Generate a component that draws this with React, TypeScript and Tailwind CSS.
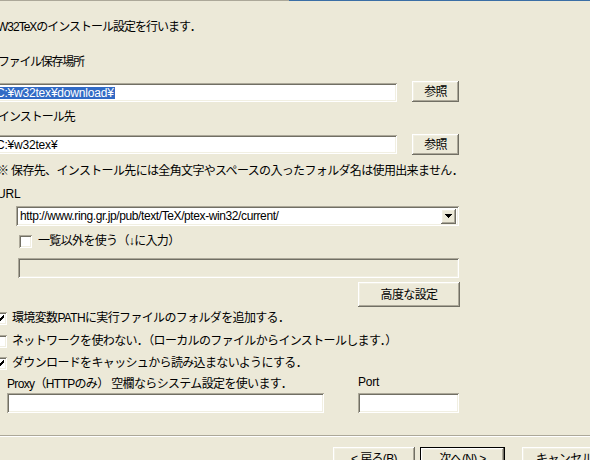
import React from "react";

const sunken =
  "shadow-[inset_1px_1px_0_#aca899,inset_-1px_-1px_0_#ffffff,inset_2px_2px_0_#716f64,inset_-2px_-2px_0_#f1efe2]";
const raised =
  "shadow-[inset_-1px_-1px_0_#716f64,inset_1px_1px_0_#ffffff,inset_-2px_-2px_0_#aca899,inset_2px_2px_0_#f1efe2]";

function Label({ children, className = "" }: { children: React.ReactNode; className?: string }) {
  return <div className={`h-[14px] leading-[14px] whitespace-nowrap ${className}`}>{children}</div>;
}

function Button({ children, className = "" }: { children: React.ReactNode; className?: string }) {
  return (
    <div className={`flex items-center justify-center whitespace-nowrap bg-[#ece9d8] ${raised} ${className}`}>
      {children}
    </div>
  );
}

function Check({ checked }: { checked?: boolean }) {
  return (
    <div className={`w-[13px] h-[13px] shrink-0 bg-white flex items-center justify-center ${sunken}`}>
      {checked && (
        <svg width="7" height="7" viewBox="0 0 7 7" shapeRendering="crispEdges">
          <path d="M6 0h1v3h-1v1h-1v1h-1v1h-1v1h-1v-1h-1v-1h-1v-3h1v1h1v1h1v-1h1v-1h1z" fill="#000" />
        </svg>
      )}
    </div>
  );
}

export default function App() {
  return (
    <div
      className="w-[590px] h-[460px] overflow-hidden bg-[#ece9d8] text-black text-[12px] tracking-[-0.65px]"
      style={{ fontFamily: '"Liberation Sans", "Noto Sans CJK JP", sans-serif' }}
    >
      <div className="flex h-[1px]">
        <div className="w-[289px] bg-[#aca899]" />
        <div className="flex-1 bg-[#3a6ea5]" />
      </div>

      <div className="flex flex-col">
        <Label className="mt-[19px] -ml-[3px] tracking-[-1px]">W32TeXのインストール設定を行います．</Label>
        <Label className="mt-[21px] -ml-[2px] tracking-[-1.3px]">ファイル保存場所</Label>

        {/* save folder */}
        <div className="mt-[12px] flex items-start h-[21px]">
          <div className={`-ml-[10px] w-[407px] h-[19px] mt-[2px] bg-white flex items-center ${sunken}`}>
            <span className="ml-[6px] bg-[#316ac5] text-white leading-[12px] h-[12px] pr-[1px] tracking-[-0.2px]">
              C:¥w32tex¥download¥
            </span>
          </div>
          <Button className="ml-[15px] w-[47px] h-[21px]">参照</Button>
        </div>

        <Label className="mt-[8px] -ml-[2px] tracking-[-1px]">インストール先</Label>

        {/* install folder */}
        <div className="mt-[10px] flex items-start h-[21px]">
          <div className={`-ml-[10px] w-[407px] h-[19px] mt-[1px] bg-white flex items-center ${sunken}`}>
            <span className="ml-[6px] tracking-[-0.2px]">C:¥w32tex¥</span>
          </div>
          <Button className="ml-[15px] w-[47px] h-[21px]">参照</Button>
        </div>

        <Label className="mt-[9px] -ml-[3px]">
          ※ 保存先、インストール先には全角文字やスペースの入ったフォルダ名は使用出来ません．
        </Label>
        <Label className="mt-[9px] -ml-[3px] tracking-[-0.2px]">URL</Label>

        {/* mirror combo */}
        <div className={`mt-[5px] ml-[16px] w-[443px] h-[20px] bg-white flex items-center ${sunken}`}>
          <span className="ml-[4px] flex-1 tracking-[-0.4px]">
            http://www.ring.gr.jp/pub/text/TeX/ptex-win32/current/
          </span>
          <div className={`w-[15px] h-[15px] mr-[3px] flex items-center justify-center bg-[#ece9d8] ${raised}`}>
            <svg width="7" height="4" viewBox="0 0 7 4" shapeRendering="crispEdges">
              <path d="M0 0h7l-3.5 4z" fill="#000" />
            </svg>
          </div>
        </div>

        <div className="mt-[8px] ml-[19px] flex items-center h-[14px]">
          <Check />
          <span className="ml-[6px] whitespace-nowrap">一覧以外を使う（↓に入力）</span>
        </div>

        <div className={`mt-[10px] ml-[18px] w-[441px] h-[20px] ${sunken}`} />

        <Button className="mt-[4px] ml-[358px] w-[102px] h-[25px]">高度な設定</Button>

        <div className="mt-[4px] -ml-[6px] flex items-center h-[14px]">
          <Check checked />
          <span className="ml-[5px] whitespace-nowrap">環境変数PATHに実行ファイルのフォルダを追加する．</span>
        </div>
        <div className="mt-[9px] -ml-[6px] flex items-center h-[14px]">
          <Check />
          <span className="ml-[5px] whitespace-nowrap">
            ネットワークを使わない．（ローカルのファイルからインストールします．）
          </span>
        </div>
        <div className="mt-[8px] -ml-[6px] flex items-center h-[14px]">
          <Check checked />
          <span className="ml-[5px] whitespace-nowrap">ダウンロードをキャッシュから読み込まないようにする．</span>
        </div>

        {/* proxy */}
        <div className="mt-[7px] flex">
          <div className="ml-[7px] w-[317px] flex flex-col">
            <Label>Proxy（HTTPのみ） 空欄ならシステム設定を使います．</Label>
            <div className={`mt-[2px] h-[20px] bg-white ${sunken}`} />
          </div>
          <div className="ml-[34px] w-[101px] flex flex-col">
            <Label className="-mt-[2px] mb-[2px] tracking-[-0.2px]">Port</Label>
            <div className={`mt-[2px] h-[20px] bg-white ${sunken}`} />
          </div>
        </div>

        <div className="mt-[22px] h-[1px] bg-[#aca899]" />
        <div className="h-[1px] bg-white" />

        <div className="mt-[10px] ml-[333px] flex">
          <Button className="w-[82px] h-[23px] shrink-0">&lt; 戻る(B)</Button>
          <div className="ml-[5px] w-[85px] h-[23px] shrink-0 border border-black">
            <Button className="w-full h-full">次へ(N) &gt;</Button>
          </div>
          <Button className="ml-[17px] w-[85px] h-[23px] shrink-0">キャンセル</Button>
        </div>
      </div>
    </div>
  );
}
